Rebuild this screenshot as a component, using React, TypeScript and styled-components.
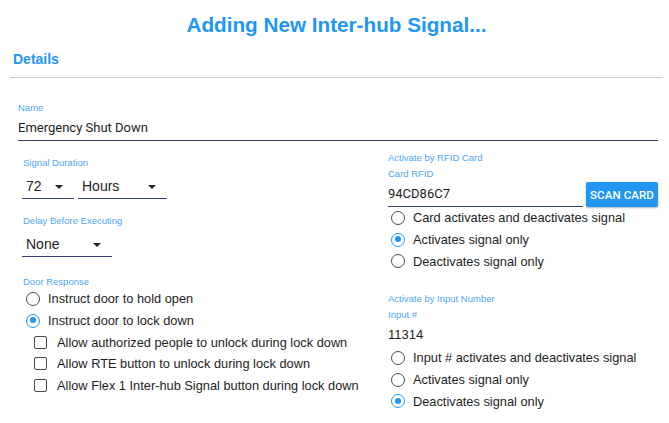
import React from 'react'
import styled, { createGlobalStyle, css } from 'styled-components'

const GlobalStyle = createGlobalStyle`
  html, body {
    margin: 0;
    padding: 0;
    background: #ffffff;
  }
  body {
    font-family: 'Liberation Sans', Arial, sans-serif;
    color: #222222;
  }
`

const blue = '#2196f3'
const lineColor = '#36416f'

const Page = styled.div`
  width: 669px;
  height: 423px;
  box-sizing: border-box;
  padding: 0 6px 0 10px;
  overflow: hidden;
`

const Title = styled.h1`
  margin: 0;
  padding-top: 13px;
  font-size: 20.7px;
  line-height: 24px;
  font-weight: 700;
  text-align: center;
  color: ${blue};
`

const SectionTitle = styled.h2`
  margin: 13px 0 0;
  padding-left: 3px;
  font-size: 14px;
  line-height: 18px;
  font-weight: 700;
  color: ${blue};
`

const Divider = styled.hr`
  margin: 9px 0 0;
  border: 0;
  border-top: 1px solid #cccccc;
`

const Form = styled.div`
  padding: 0 5px 0 8px;
`

const Columns = styled.div`
  display: grid;
  grid-template-columns: 370px 1fr;
`

const Column = styled.div<{ $inset?: number }>`
  display: flex;
  flex-direction: column;
  padding-left: ${(p) => p.$inset ?? 0}px;
`

const Label = styled.div<{ $top?: number; $indent?: number }>`
  margin-top: ${(p) => p.$top ?? 0}px;
  padding-left: ${(p) => p.$indent ?? 0}px;
  font-size: 9.5px;
  line-height: 12px;
  color: #4fa6f2;
`

const TextValue = styled.div<{ $underline?: boolean; $plain?: boolean }>`
  flex: none;
  height: 26px;
  display: flex;
  align-items: center;
  font-family: ${(p) => (p.$plain ? "'Liberation Sans', Arial, sans-serif" : "'Roboto', 'Liberation Sans', sans-serif")};
  font-size: 13px;
  color: #1d1d1d;
  ${(p) =>
    p.$underline &&
    css`
      border-bottom: 1px solid ${lineColor};
    `}
`

const NameField = styled.div`
  margin-top: 24px;
  display: flex;
  flex-direction: column;
`

const SelectRow = styled.div`
  display: flex;
  gap: 4px;
  margin-top: 4px;
`

const Select = styled.div<{ $width: number }>`
  position: relative;
  width: ${(p) => p.$width}px;
  height: 26px;
  box-sizing: border-box;
  padding-left: 4px;
  display: flex;
  align-items: center;
  font-size: 14px;
  color: #1d1d1d;
  border-bottom: 1px solid ${lineColor};
`

const Caret = styled.span`
  position: absolute;
  right: 11px;
  top: 12px;
  width: 0;
  height: 0;
  border-left: 4px solid transparent;
  border-right: 4px solid transparent;
  border-top: 4px solid #222222;
`

const OptionRow = styled.label<{ $indent: number }>`
  display: flex;
  align-items: center;
  height: 21.7px;
  padding-left: ${(p) => p.$indent}px;
  font-size: 12.8px;
  color: #1d1d1d;
  white-space: nowrap;
`

const RadioMark = styled.span<{ $checked?: boolean }>`
  position: relative;
  flex: none;
  width: 14px;
  height: 14px;
  box-sizing: border-box;
  border-radius: 50%;
  border: 1.5px solid ${(p) => (p.$checked ? blue : '#4a4a4a')};
  margin-right: 8px;
  ${(p) =>
    p.$checked &&
    css`
      &::after {
        content: '';
        position: absolute;
        left: 2.5px;
        top: 2.5px;
        width: 6px;
        height: 6px;
        border-radius: 50%;
        background: ${blue};
      }
    `}
`

const CheckMark = styled.span`
  flex: none;
  width: 13px;
  height: 13px;
  box-sizing: border-box;
  border: 1.5px solid #4a4a4a;
  border-radius: 2px;
  margin-right: 10px;
`

const InputRow = styled.div`
  display: flex;
  align-items: flex-end;
  gap: 3px;
`

const RfidValue = styled(TextValue)`
  height: 27px;
  box-sizing: border-box;
  width: 195px;
`

const ScanButton = styled.button`
  width: 72px;
  height: 25px;
  border: 0;
  border-radius: 2px;
  background: ${blue};
  color: #ffffff;
  font-family: 'Roboto', 'Liberation Sans', sans-serif;
  font-weight: 500;
  font-size: 11.5px;
  letter-spacing: 0.1px;
  padding: 0;
  box-shadow: 0 1px 2px rgba(0, 0, 0, 0.3);
`

const Radio = ({ checked, children, indent }: { checked?: boolean; children: React.ReactNode; indent: number }) => (
  <OptionRow $indent={indent}>
    <RadioMark $checked={checked} />
    {children}
  </OptionRow>
)

const Check = ({ children }: { children: React.ReactNode }) => (
  <OptionRow $indent={12}>
    <CheckMark />
    {children}
  </OptionRow>
)

export default function App() {
  return (
    <>
      <GlobalStyle />
      <Page>
        <Title>Adding New Inter-hub Signal...</Title>
        <SectionTitle>Details</SectionTitle>
        <Divider />
        <Form>
          <NameField>
            <Label>Name</Label>
            <TextValue $underline>Emergency Shut Down</TextValue>
          </NameField>
          <Columns>
            <Column $inset={4}>
              <Label $top={16} $indent={1}>Signal Duration</Label>
              <SelectRow>
                <Select $width={52}>
                  72
                  <Caret />
                </Select>
                <Select $width={89}>
                  Hours
                  <Caret />
                </Select>
              </SelectRow>
              <Label $top={16} $indent={1}>Delay Before Executing</Label>
              <SelectRow>
                <Select $width={90}>
                  None
                  <Caret />
                </Select>
              </SelectRow>
              <Label $top={19} $indent={1}>Door Response</Label>
              <Radio indent={4}>Instruct door to hold open</Radio>
              <Radio indent={4} checked>
                Instruct door to lock down
              </Radio>
              <Check>Allow authorized people to unlock during lock down</Check>
              <Check>Allow RTE button to unlock during lock down</Check>
              <Check>Allow Flex 1 Inter-hub Signal button during lock down</Check>
            </Column>
            <Column>
              <Label $top={11}>Activate by RFID Card</Label>
              <Label $top={4}>Card RFID</Label>
              <InputRow>
                <RfidValue $underline>94CD86C7</RfidValue>
                <ScanButton>SCAN CARD</ScanButton>
              </InputRow>
              <Radio indent={3}>Card activates and deactivates signal</Radio>
              <Radio indent={3} checked>
                Activates signal only
              </Radio>
              <Radio indent={3}>Deactivates signal only</Radio>
              <Label $top={21}>Activate by Input Number</Label>
              <Label $top={4}>Input #</Label>
              <TextValue $plain>11314</TextValue>
              <Radio indent={3}>Input # activates and deactivates signal</Radio>
              <Radio indent={3}>Activates signal only</Radio>
              <Radio indent={3} checked>
                Deactivates signal only
              </Radio>
            </Column>
          </Columns>
        </Form>
      </Page>
    </>
  )
}
